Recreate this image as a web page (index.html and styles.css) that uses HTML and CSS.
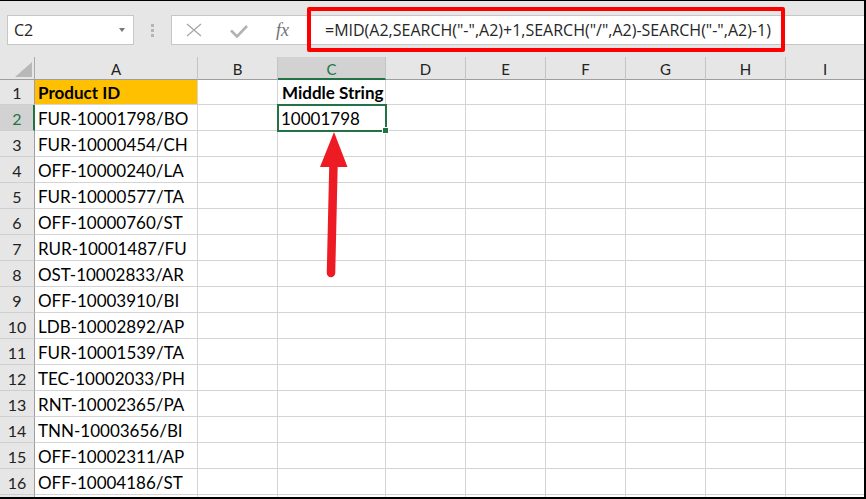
FILE: index.html
```html
<!DOCTYPE html>
<html>
<head>
<meta charset="utf-8">
<link rel="stylesheet" href="styles.css">
</head>
<body>
<div class="app">
  <div class="toolbar">
    <div class="namebox"><span class="ref">C2</span><span class="caret"></span></div>
    <div class="grip"><i></i><i></i><i></i></div>
    <div class="fbar">
      <svg class="cancel" width="16" height="14" viewBox="0 0 16 14"><path d="M1 1 L15 13 M15 1 L1 13" stroke="#a9a9a9" stroke-width="1.4" fill="none"/></svg>
      <svg class="enter" width="18" height="13" viewBox="0 0 18 13"><path d="M1 5.5 L7 11.5 L17 1" stroke="#b3b3b3" stroke-width="2.6" fill="none"/></svg>
      <span class="fx">fx</span>
      <div class="formula">=MID(A2,SEARCH("-",A2)+1,SEARCH("/",A2)-SEARCH("-",A2)-1)</div>
    </div>
  </div>
  <div class="sheet">
    <div class="corner"><svg width="34" height="22" viewBox="0 0 34 22"><polygon points="15,20 32,20 32,5" fill="#b8b8b8"/></svg></div>
    <div class="ch">A</div><div class="ch">B</div><div class="ch sel">C</div><div class="ch">D</div><div class="ch">E</div><div class="ch">F</div><div class="ch">G</div><div class="ch">H</div><div class="ch last">I</div>

    <div class="rh">1</div><div class="c head">Product ID</div><div class="c"></div><div class="c bold">Middle String</div><div class="c"></div><div class="c"></div><div class="c"></div><div class="c"></div><div class="c"></div><div class="c last"></div>
    <div class="rh sel">2</div><div class="c">FUR-10001798/BO</div><div class="c"></div><div class="c active">10001798<span class="selbox"><span class="handle"></span></span></div><div class="c"></div><div class="c"></div><div class="c"></div><div class="c"></div><div class="c"></div><div class="c last"></div>
    <div class="rh">3</div><div class="c">FUR-10000454/CH</div><div class="c"></div><div class="c"></div><div class="c"></div><div class="c"></div><div class="c"></div><div class="c"></div><div class="c"></div><div class="c last"></div>
    <div class="rh">4</div><div class="c">OFF-10000240/LA</div><div class="c"></div><div class="c"></div><div class="c"></div><div class="c"></div><div class="c"></div><div class="c"></div><div class="c"></div><div class="c last"></div>
    <div class="rh">5</div><div class="c">FUR-10000577/TA</div><div class="c"></div><div class="c"></div><div class="c"></div><div class="c"></div><div class="c"></div><div class="c"></div><div class="c"></div><div class="c last"></div>
    <div class="rh">6</div><div class="c">OFF-10000760/ST</div><div class="c"></div><div class="c"></div><div class="c"></div><div class="c"></div><div class="c"></div><div class="c"></div><div class="c"></div><div class="c last"></div>
    <div class="rh">7</div><div class="c">RUR-10001487/FU</div><div class="c"></div><div class="c"></div><div class="c"></div><div class="c"></div><div class="c"></div><div class="c"></div><div class="c"></div><div class="c last"></div>
    <div class="rh">8</div><div class="c">OST-10002833/AR</div><div class="c"></div><div class="c"></div><div class="c"></div><div class="c"></div><div class="c"></div><div class="c"></div><div class="c"></div><div class="c last"></div>
    <div class="rh">9</div><div class="c">OFF-10003910/BI</div><div class="c"></div><div class="c"></div><div class="c"></div><div class="c"></div><div class="c"></div><div class="c"></div><div class="c"></div><div class="c last"></div>
    <div class="rh">10</div><div class="c">LDB-10002892/AP</div><div class="c"></div><div class="c"></div><div class="c"></div><div class="c"></div><div class="c"></div><div class="c"></div><div class="c"></div><div class="c last"></div>
    <div class="rh">11</div><div class="c">FUR-10001539/TA</div><div class="c"></div><div class="c"></div><div class="c"></div><div class="c"></div><div class="c"></div><div class="c"></div><div class="c"></div><div class="c last"></div>
    <div class="rh">12</div><div class="c">TEC-10002033/PH</div><div class="c"></div><div class="c"></div><div class="c"></div><div class="c"></div><div class="c"></div><div class="c"></div><div class="c"></div><div class="c last"></div>
    <div class="rh">13</div><div class="c">RNT-10002365/PA</div><div class="c"></div><div class="c"></div><div class="c"></div><div class="c"></div><div class="c"></div><div class="c"></div><div class="c"></div><div class="c last"></div>
    <div class="rh">14</div><div class="c">TNN-10003656/BI</div><div class="c"></div><div class="c"></div><div class="c"></div><div class="c"></div><div class="c"></div><div class="c"></div><div class="c"></div><div class="c last"></div>
    <div class="rh">15</div><div class="c">OFF-10002311/AP</div><div class="c"></div><div class="c"></div><div class="c"></div><div class="c"></div><div class="c"></div><div class="c"></div><div class="c"></div><div class="c last"></div>
    <div class="rh">16</div><div class="c">OFF-10004186/ST</div><div class="c"></div><div class="c"></div><div class="c"></div><div class="c"></div><div class="c"></div><div class="c"></div><div class="c"></div><div class="c last"></div>
    <div class="rh end"></div><div class="c end"></div><div class="c end"></div><div class="c end"></div><div class="c end"></div><div class="c end"></div><div class="c end"></div><div class="c end"></div><div class="c end"></div><div class="c end last"></div>
  </div>
  <div class="highlight"></div>
  <svg class="arrow" width="866" height="499" viewBox="0 0 866 499">
    <line x1="333.5" y1="164" x2="331" y2="273" stroke="#ed1c24" stroke-width="8.5" stroke-linecap="round"/>
    <polygon points="334,132 347.5,167 320,167" fill="#ed1c24"/>
  </svg>
</div>
</body>
</html>
```

FILE: styles.css
```css
* { box-sizing: border-box; }
html, body { margin: 0; padding: 0; background: #fff; }
body { font-family: Lato, "Open Sans", sans-serif; }

.app {
  position: relative;
  width: 866px;
  height: 499px;
  border-top: 1px solid #000;
  border-right: 2px solid #000;
  border-bottom: 2px solid #000;
  overflow: hidden;
  display: flex;
  flex-direction: column;
}

.toolbar {
  height: 56px;
  flex: none;
  background: #e6e6e6;
  display: flex;
  align-items: flex-start;
  padding: 14px 0 0 7px;
}

.namebox {
  width: 127px;
  height: 30px;
  background: #fff;
  border: 1px solid #c6c6c6;
  display: flex;
  align-items: center;
  justify-content: space-between;
  padding: 0 8px 0 6px;
}
.ref {
  font-family: "Open Sans", sans-serif;
  font-size: 16px;
  color: #262626;
}
.caret {
  width: 0; height: 0;
  border-left: 3.5px solid transparent;
  border-right: 3.5px solid transparent;
  border-top: 4px solid #777;
}

.grip {
  width: 37px;
  height: 30px;
  display: flex;
  flex-direction: column;
  align-items: center;
  justify-content: center;
  gap: 2px;
}
.grip i {
  display: block;
  width: 3px;
  height: 3px;
  background: #b4b4b4;
}

.fbar {
  flex: 1;
  height: 30px;
  background: #fff;
  border: 1px solid #c6c6c6;
  border-right: none;
  display: flex;
  align-items: center;
}
.cancel { margin-left: 14px; flex: none; }
.enter { margin-left: 28px; flex: none; margin-top: 2px; }
.fx {
  margin-left: 28px;
  font-family: "Liberation Serif", serif;
  font-style: italic;
  font-size: 18px;
  color: #707070;
  width: 16px;
}
.formula {
  margin-left: 33px;
  font-family: "Open Sans", sans-serif;
  font-size: 16px;
  color: #262626;
  white-space: nowrap;
}

.sheet {
  flex: 1;
  display: grid;
  grid-template-columns: 35px 163px 80px 108px 80px 80px 80px 80px 80px 78px;
  grid-template-rows: 23px 25px repeat(15, 26px) 1fr;
  background: #fff;
}

.corner {
  background: #e6e6e6;
  border-right: 1px solid #ababab;
  border-bottom: 1px solid #9e9e9e;
}
.corner svg { display: block; }

.ch {
  background: #e6e6e6;
  border-right: 1px solid #c4c4c4;
  border-bottom: 1px solid #9e9e9e;
  display: flex;
  align-items: center;
  justify-content: center;
  font-size: 15px;
  color: #222;
  padding-top: 1px;
}
.ch.sel {
  background: #d2d2d2;
  color: #217346;
  border-bottom: 2px solid #217346;
  padding-top: 2px;
}
.ch.last { border-right: none; }

.rh {
  background: #e6e6e6;
  border-right: 1px solid #9e9e9e;
  border-bottom: 1px solid #cfcfcf;
  display: flex;
  align-items: center;
  justify-content: center;
  font-size: 16px;
  color: #222;
  padding-top: 1px;
}
.rh.sel {
  background: #d2d2d2;
  color: #217346;
  border-right: 2px solid #217346;
  padding-left: 1px;
}

.c {
  border-right: 1px solid #d4d4d4;
  border-bottom: 1px solid #d4d4d4;
  font-size: 17px;
  color: #000;
  padding: 1px 0 0 3px;
  display: flex;
  align-items: center;
  white-space: nowrap;
  overflow: visible;
}
.c.last { border-right: none; }
.c.end, .rh.end { border-bottom: none; }
.c.head {
  background: #ffc000;
  font-weight: bold;
}
.c.bold { font-weight: bold; padding-left: 4px; }
.c.active { position: relative; }

.selbox {
  position: absolute;
  left: -1px;
  top: -1px;
  right: -2px;
  bottom: -2px;
  border: 2px solid #217346;
}
.handle {
  position: absolute;
  right: -3px;
  bottom: -3px;
  width: 5px;
  height: 5px;
  background: #217346;
  box-shadow: 0 0 0 1px #fff;
}

.highlight {
  position: absolute;
  left: 307px;
  top: 6px;
  width: 478px;
  height: 45px;
  border: 4px solid #ff0000;
  border-radius: 2px;
}

.arrow {
  position: absolute;
  left: 0;
  top: -1px;
  pointer-events: none;
}
```
